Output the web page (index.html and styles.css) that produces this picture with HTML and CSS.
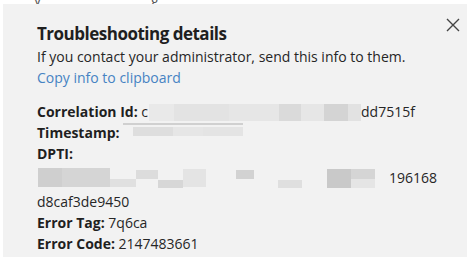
FILE: index.html
```html
<!DOCTYPE html>
<html>
<head>
<meta charset="utf-8">
<link rel="stylesheet" href="styles.css">
</head>
<body>
<div class="above"><span class="a1">y</span><span class="a2">g</span></div>
<div class="panel">
  <button class="close" aria-label="Close">
    <svg width="14" height="14" viewBox="0 0 14 14"><path d="M1 1L13 13M13 1L1 13" stroke="#444" stroke-width="1.4" fill="none"/></svg>
  </button>
  <h2 class="title">Troubleshooting details</h2>
  <p class="line">If you contact your administrator, send this info to them.</p>
  <p class="line link">Copy info to clipboard</p>
  <div class="details">
    <p class="line"><b>Correlation Id:</b> c<span class="blur b-corr"><i class="s s1"></i><i class="s s2"></i><i class="s s3"></i><i class="s s4"></i><i class="s s5"></i><i class="s s6"></i><i class="s s7"></i></span>dd7515f</p>
    <p class="line"><b>Timestamp:</b> <span class="blur b-ts"><i class="t t1"></i><i class="t t2"></i><i class="t t3"></i><i class="t t4"></i></span></p>
    <p class="line"><b>DPTI:</b></p>
    <p class="line dpti"><span class="blur b-dpti"><i class="d d1"></i><i class="d d2"></i><i class="d d3"></i><i class="d d4"></i><i class="d d5"></i><i class="d d6"></i><i class="d d7"></i><i class="d d8"></i><i class="d d9"></i><i class="d d10"></i><i class="d d11"></i></span>196168</p>
    <p class="line">d8caf3de9450</p>
    <p class="line"><b>Error Tag:</b> 7q6ca</p>
    <p class="line"><b>Error Code:</b> 2147483661</p>
  </div>
</div>
</body>
</html>
```
FILE: styles.css
```css
html, body { margin: 0; padding: 0; background: #fff; }
body {
  width: 472px; height: 264px; overflow: hidden;
  font-family: "Open Sans", "Noto Sans", sans-serif;
  color: #262626;
}
.above {
  height: 4px; overflow: hidden; font-size: 14px; line-height: 0px;
  padding-left: 34px; color: #555; display: flex;
}
.above span { display: block; }
.a2 { margin-left: 110px; }
.panel {
  position: relative;
  margin: 0 5px 0 3px;
  height: 253px;
  background: #f2f2f2;
  padding: 18px 0 0 34px;
  box-sizing: border-box;
}
.close {
  position: absolute; right: 7px; top: 14px;
  border: 0; background: none; padding: 0; width: 14px; height: 14px;
}
.close svg { display: block; }
.title {
  margin: 0; font-size: 17px; letter-spacing: -0.5px; font-weight: 700; line-height: 24px; color: #1f1f1f;
}
.line { margin: 0; font-size: 14px; line-height: 21px; white-space: nowrap; }
.link { color: #4683c3; }
.details { margin-top: 13px; }
b { font-weight: 700; color: #1f1f1f; }
.blur { display: inline-block; position: relative; vertical-align: middle; height: 18px; }
.blur i { position: absolute; display: block; }
.b-corr { width: 212px; margin-left: 1px; margin-right: 0; }
.s1 { left: 0; width: 25px; top: 0; height: 17px; background: #e9e9e9; }
.s2 { left: 25px; width: 55px; top: 0; height: 17px; background: #e3e3e3; }
.s3 { left: 80px; width: 50px; top: 0; height: 17px; background: #e6e6e6; }
.s4 { left: 130px; width: 22px; top: 0; height: 17px; background: #dadada; }
.s5 { left: 152px; width: 23px; top: 0; height: 17px; background: #e6e6e6; }
.s6 { left: 175px; width: 24px; top: 0; height: 17px; background: #d4d4d4; }
.s7 { left: 199px; width: 13px; top: 0; height: 17px; background: #e2e2e2; }
.b-ts { width: 125px; height: 12px; vertical-align: top; margin-top: 1px; }
.t1 { left: 0; width: 120px; top: 0; height: 2px; background: #d0d0d0; }
.t2 { left: 10px; width: 40px; top: 4px; height: 9px; background: #dedede; }
.t3 { left: 50px; width: 30px; top: 4px; height: 9px; background: #e6e6e6; }
.t4 { left: 80px; width: 40px; top: 4px; height: 9px; background: #e4e4e4; }
.dpti { height: 27px; line-height: 27px; }
.b-dpti { width: 337px; height: 20px; margin-right: 14px; margin-left: 1px; vertical-align: top; margin-top: 4px; }
.d1 { left: 0; width: 24px; top: 0; height: 19px; background: #cfcfcf; }
.d2 { left: 24px; width: 48px; top: 0; height: 19px; background: #d5d5d5; }
.d3 { left: 72px; width: 26px; top: 11px; height: 8px; background: #e0e0e0; }
.d4 { left: 98px; width: 22px; top: 2px; height: 9px; background: #dcdcdc; }
.d5 { left: 120px; width: 25px; top: 12px; height: 8px; background: #d7d7d7; }
.d6 { left: 145px; width: 23px; top: 1px; height: 18px; background: #e4e4e4; }
.d7 { left: 198px; width: 18px; top: 2px; height: 9px; background: #d2d2d2; }
.d8 { left: 240px; width: 24px; top: 12px; height: 8px; background: #dfdfdf; }
.d9 { left: 289px; width: 24px; top: 1px; height: 19px; background: #c9c9c9; }
.d10 { left: 313px; width: 24px; top: 1px; height: 10px; background: #d5d5d5; }
.d11 { left: 313px; width: 24px; top: 11px; height: 9px; background: #e5e5e5; }
```
